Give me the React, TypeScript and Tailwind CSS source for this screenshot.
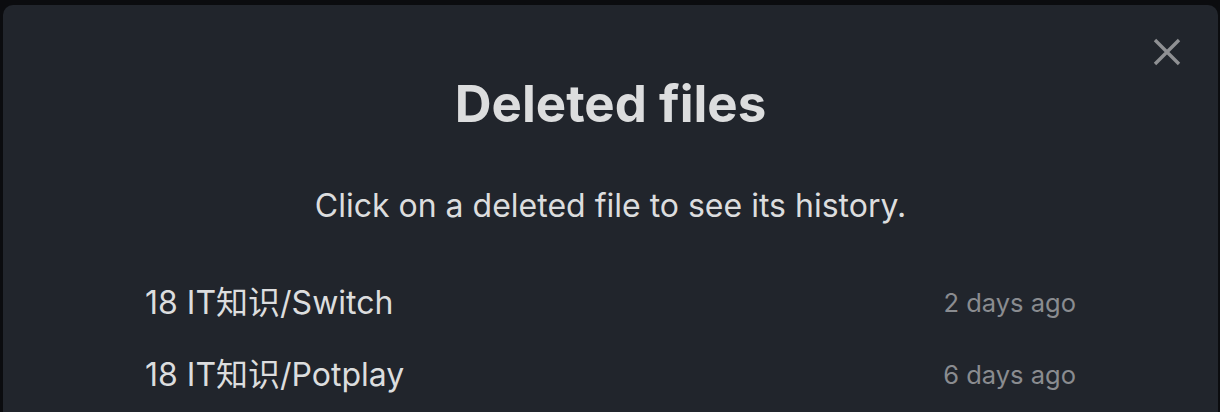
import React from "react";

type DeletedFile = {
  path: string;
  when: string;
};

const files: DeletedFile[] = [
  { path: "18 IT知识/Switch", when: "2 days ago" },
  { path: "18 IT知识/Potplay", when: "6 days ago" },
];

export default function App() {
  return (
    <div
      className="h-[412px] w-full overflow-hidden bg-[#0b0c0f] pl-[3px] pr-[2px] pt-[5px]"
      style={{ fontFamily: 'Inter, "Noto Sans CJK SC", sans-serif' }}
    >
      <div className="relative h-[520px] rounded-[10px] bg-[#21252c] pt-[68px] text-[#dcddde]">
        <button className="absolute right-[37px] top-[33px] text-[#8f9093]">
          <svg width="28" height="28" viewBox="0 0 28 28" fill="none">
            <path d="M2 2L26 26M26 2L2 26" stroke="currentColor" strokeWidth="3.4" />
          </svg>
        </button>

        <h2 className="text-center text-[51px] font-bold leading-[1.2]">Deleted files</h2>

        <p className="mt-[48px] text-center text-[32px] leading-[1.5]">
          Click on a deleted file to see its history.
        </p>

        <div className="mt-[49px] flex flex-col gap-[24px] px-[142px]">
          {files.map((file) => (
            <div key={file.path} className="flex items-baseline justify-between">
              <span className="text-[32px] leading-[1.5]">{file.path}</span>
              <span className="-translate-y-[2px] text-[25.5px] leading-[1.5] text-[#8a8c90]">
                {file.when}
              </span>
            </div>
          ))}
        </div>
      </div>
    </div>
  );
}
